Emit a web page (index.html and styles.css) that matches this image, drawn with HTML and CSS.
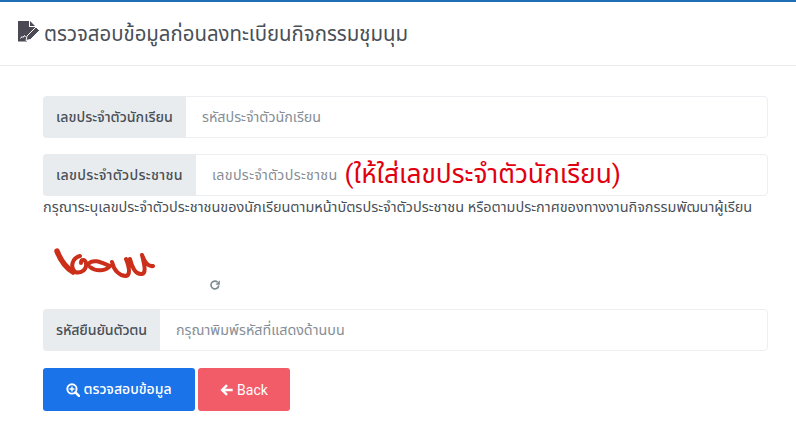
FILE: index.html
```html
<!DOCTYPE html>
<html lang="th">
<head>
<meta charset="utf-8">
<title>ตรวจสอบข้อมูล</title>
<link rel="stylesheet" href="styles.css">
</head>
<body>
<div class="card">
  <header class="card-header">
    <svg class="head-icon" viewBox="0 0 23 21" aria-hidden="true">
      <path fill="#4b4a54" d="M0 0h11v6h6v2.500L9.500 16 9 20.500H0z"/>
      <path fill="#4b4a54" d="M12 0l5 5h-5z"/>
      <path d="M2.500 17.500l1.500-2 1 1 1.500-2 1 1.500" fill="none" stroke="#fff" stroke-width="1"/>
      <path fill="#4b4a54" d="M18 6l3.500 3.500-9 9-4.500 1 1-4.500z" stroke="#fff" stroke-width="1"/>
    </svg>
    <h1 class="title">ตรวจสอบข้อมูลก่อนลงทะเบียนกิจกรรมชุมนุม</h1>
  </header>
  <form class="card-body">
    <div class="input-group">
      <span class="addon">เลขประจำตัวนักเรียน</span>
      <span class="field">รหัสประจำตัวนักเรียน</span>
    </div>
    <div class="input-group group-id">
      <span class="addon addon-wide">เลขประจำตัวประชาชน</span>
      <span class="field"><span class="wide-text">เลขประจำตัวประชาชน</span><em class="note">(ให้ใส่เลขประจำตัวนักเรียน)</em></span>
    </div>
    <p class="hint">กรุณาระบุเลขประจำตัวประชาชนของนักเรียนตามหน้าบัตรประจำตัวประชาชน หรือตามประกาศของทางงานกิจกรรมพัฒนาผู้เรียน</p>
    <div class="captcha-row">
      <svg class="captcha" viewBox="0 0 110 40" aria-hidden="true">
        <path d="M7 6c3 8 8 16 16 21" fill="none" stroke="#cb2f19" stroke-width="5.500" stroke-linecap="round"/>
        <path d="M30 11C22 13 20 22 25 27 32 29 37 24 36 18 35 14 31 14 31 18M38 19C44 13 52 18 60 21 56 26 46 27 40 22M62 17C64 26 70 31 76 31 80 30 80 24 76 14M80 14C82 22 86 30 92 29 96 28 95 22 92 10M92 10C95 18 98 22 103 21" fill="none" stroke="#cb2f19" stroke-width="4" stroke-linecap="round" stroke-linejoin="round"/>
      </svg>
      <svg class="refresh" viewBox="0 0 16 16" aria-hidden="true">
        <path d="M13 8.500A5.200 5.200 0 1 1 11.500 4.300" fill="none" stroke="#7f8c92" stroke-width="2.200"/>
        <path d="M14.500 1.500v6h-6z" fill="#7f8c92"/>
      </svg>
    </div>
    <div class="input-group">
      <span class="addon addon-narrow">รหัสยืนยันตัวตน</span>
      <span class="field">กรุณาพิมพ์รหัสที่แสดงด้านบน</span>
    </div>
    <div class="actions">
      <button type="button" class="btn btn-blue">
        <svg class="btn-icon" viewBox="0 0 16 16" aria-hidden="true">
          <circle cx="6.800" cy="6.800" r="5.300" fill="none" stroke="#fff" stroke-width="2.200"/>
          <path d="M10.800 10.800l4 4" stroke="#fff" stroke-width="2.800" stroke-linecap="round"/>
          <path d="M4 6.800h5.600M6.800 4v5.600" stroke="#fff" stroke-width="1.600"/>
        </svg>
        ตรวจสอบข้อมูล
      </button>
      <button type="button" class="btn btn-red">
        <svg class="btn-icon" viewBox="0 0 16 16" aria-hidden="true">
          <path d="M8 2.500L2.500 8 8 13.500M3 8h11.500" fill="none" stroke="#fff" stroke-width="2.800"/>
        </svg>
        Back
      </button>
    </div>
  </form>
</div>
</body>
</html>
```

FILE: styles.css
```css
* { box-sizing: border-box; }
html, body { margin: 0; padding: 0; }
body {
  width: 796px;
  height: 433px;
  overflow: hidden;
  background: #fff;
  color: #495057;
  font-family: Roboto, "Noto Sans", "Noto Sans Thai", "Liberation Sans", sans-serif;
  font-size: 14px;
}
.card { border-top: 2px solid #1f6fb5; }
.card-header {
  display: flex;
  align-items: center;
  gap: 3px;
  height: 64px;
  padding: 0 18px;
  border-bottom: 1px solid #e9ecef;
}
.head-icon { width: 23px; height: 21px; flex: none; margin-top: -4px; }
.title { margin: 2px 0 0; font-size: 20.400px; font-weight: 400; color: #495057; white-space: nowrap; }
.card-body { padding: 30px 28px 0 43px; }
.input-group {
  display: flex;
  height: 42px;
  border: 1px solid #eceef1;
  border-radius: 4px;
}
.group-id { margin-top: 16px; }
.addon {
  display: flex;
  align-items: center;
  padding: 0 13px;
  margin: -1px 0 -1px -1px;
  background: #e9ecef;
  border-radius: 4px 0 0 4px;
  font-size: 14.200px;
  font-weight: 500;
  color: #495057;
}
.addon-wide { letter-spacing: 0.300px; }
.addon-narrow { letter-spacing: -0.150px; }
.field {
  display: flex;
  align-items: center;
  flex: 1;
  padding-left: 16px;
  font-size: 14.300px;
  color: #868e96;
  white-space: pre;
}
.wide-text { letter-spacing: 0.300px; }
.note {
  font-style: normal;
  font-size: 26.300px;
  color: #e0000f;
  margin-left: 7px;
}
.hint { margin: 2px 0 0; font-size: 14.450px; line-height: 20px; color: #495057; white-space: nowrap; }
.captcha-row { display: flex; height: 91px; align-items: flex-start; }
.captcha { width: 110px; height: 40px; margin: 27px 0 0 7px; flex: none; }
.refresh { width: 12px; height: 12px; margin: 61px 0 0 49px; flex: none; }
.actions { display: flex; gap: 3px; margin-top: 17px; }
.btn {
  display: flex;
  align-items: center;
  justify-content: center;
  gap: 3px;
  height: 43px;
  border: 0;
  border-radius: 3px;
  color: #fff;
  font-family: inherit;
  font-size: 14px;
}
.btn-blue { width: 152px; background: #1a73e8; font-weight: 500; }
.btn-red { width: 92px; background: #f25c68; }
.btn-icon { width: 14px; height: 14px; flex: none; }
```
